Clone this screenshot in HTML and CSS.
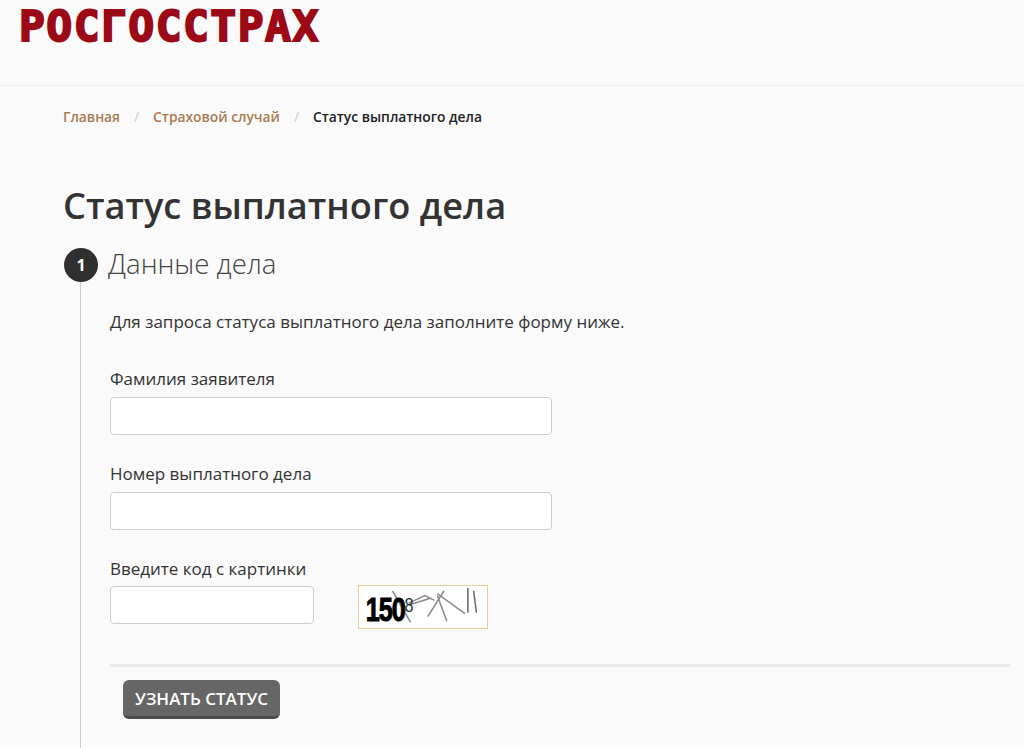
FILE: index.html
```html
<!DOCTYPE html>
<html lang="ru">
  <head>
    <meta charset="UTF-8" />
    <meta name="viewport" content="width=device-width, initial-scale=1.0" />
    <title>Статус выплатного дела</title>
    <link rel="stylesheet" href="styles.css">
  </head>

  <body>
    <header class="site-header">
      <a class="logo" href="#">РОСГОССТРАХ</a>
    </header>

    <main class="content">
      <nav class="breadcrumbs">
        <a href="#">Главная</a>
        <span class="sep">/</span>
        <a href="#">Страховой случай</a>
        <span class="sep">/</span>
        <span class="current">Статус выплатного дела</span>
      </nav>

      <h1>Статус выплатного дела</h1>

      <div class="step-head">
        <span class="step-num">1</span>
        <h2>Данные дела</h2>
      </div>

      <div class="step-body">
        <p class="intro">Для запроса статуса выплатного дела заполните форму ниже.</p>

        <form class="form">
          <div class="field">
            <label for="surname">Фамилия заявителя</label>
            <input type="text" id="surname" autocomplete="off" />
          </div>

          <div class="field">
            <label for="case">Номер выплатного дела</label>
            <input type="text" id="case" autocomplete="off" />
          </div>

          <div class="field">
            <label for="code">Введите код с картинки</label>
            <div class="captcha-row">
              <input class="short" type="text" id="code" autocomplete="off" />
              <svg class="captcha" width="130" height="44" viewBox="0 0 130 44">
                <g fill="none" stroke="#8a8a8a" stroke-width="1.6">
                  <path d="M33 5 L52 38" />
                  <path d="M50 18 L67 10 L77 15" />
                  <path d="M50 20 L72 13" />
                  <path d="M70 32 L87 5" />
                  <path d="M80 10 L90 37" />
                  <path d="M80 8 L109 29" />
                </g>
                <g stroke="#666" stroke-width="1.6">
                  <line x1="112" y1="2" x2="112" y2="28" />
                  <line x1="118" y1="5" x2="121" y2="28" />
                </g>
                <text class="captcha-text" transform="translate(5 37) scale(.78 1)">150<tspan class="thin" dx="0" dy="-10">8</tspan></text>
              </svg>
            </div>
          </div>

          <div class="actions">
            <button type="button">УЗНАТЬ СТАТУС</button>
          </div>
        </form>
      </div>
    </main>
  </body>
</html>
```

FILE: styles.css
```css
html,
body {
  height: 100%;
}

body {
  margin: 0;
  height: 748px;
  overflow: hidden;
  background: #fafafa;
  color: #333;
  font-family: "Open Sans", "Noto Sans", sans-serif;
  font-size: 17px;
}

.site-header {
  height: 86px;
  box-sizing: border-box;
  border-bottom: 1px solid #eee;
  padding: 0 0 0 19px;
}

.logo {
  display: block;
  width: 303px;
  height: 44px;
  color: #9c0a17;
  font-family: "DejaVu Sans Mono", monospace;
  font-weight: 700;
  font-size: 43px;
  line-height: 53px;
  letter-spacing: 1.45px;
  -webkit-text-stroke: 2px #9c0a17;
  text-decoration: none;
  white-space: nowrap;
}

.content {
  padding: 0 14px 0 63px;
}

.breadcrumbs {
  display: flex;
  gap: 14px;
  padding-top: 21px;
  height: 20px;
  line-height: 19px;
  font-size: 13.8px;
  font-weight: 600;
}

.breadcrumbs a {
  color: #a67c52;
  text-decoration: none;
}

.breadcrumbs .sep {
  color: #ccc;
  font-weight: 400;
}

.breadcrumbs .current {
  color: #222;
}

h1 {
  margin: 55px 0 0;
  font-size: 36.2px;
  line-height: 46px;
  font-weight: 600;
  color: #333;
}

.step-head {
  display: flex;
  align-items: center;
  gap: 10px;
  margin: 20px 0 0 1px;
}

.step-num {
  width: 34px;
  height: 34px;
  border-radius: 50%;
  background: #2f2f2f;
  color: #fff;
  font-size: 16px;
  font-weight: 700;
  line-height: 34px;
  text-align: center;
}

h2 {
  margin: 0;
  padding-bottom: 4px;
  font-size: 27.6px;
  line-height: 30px;
  font-weight: 300;
  color: #444;
}

.step-body {
  margin-left: 17px;
  border-left: 1px solid #ccc;
  padding: 29px 0 60px 29px;
}

.intro {
  margin: 0;
  line-height: 22px;
}

.form {
  margin-top: 35px;
}

.field {
  margin-bottom: 28px;
}

.field label {
  display: block;
  line-height: 22px;
  margin-bottom: 7px;
}

.field input {
  display: block;
  box-sizing: border-box;
  width: 442px;
  height: 38px;
  border: 1px solid #ccc;
  border-radius: 4px;
  background: #fff;
}

.field input.short {
  width: 204px;
}

.captcha-row {
  display: flex;
  gap: 44px;
  margin-top: -1px;
}

.captcha {
  display: block;
  box-sizing: border-box;
  margin-top: -1px;
  border: 1px solid #eccb9a;
  background: #fff;
}

.captcha-text {
  font-family: "Liberation Sans", sans-serif;
  font-size: 34px;
  font-weight: 700;
  letter-spacing: -1.5px;
  fill: #000;
  stroke: #000;
  stroke-width: 1px;
}

.captcha-text .thin {
  font-size: 22px;
  font-weight: 400;
  fill: #333;
  stroke: none;
}

.actions {
  margin-top: 35px;
  border-top: 3px solid #e8e8e8;
  padding: 13px 0 0 13px;
}

.actions button {
  display: block;
  height: 39px;
  padding: 0 12px;
  border: 0;
  border-bottom: 3px solid #4c4c4c;
  border-radius: 6px;
  background: #666;
  color: #fff;
  font-family: "Open Sans", sans-serif;
  font-size: 17px;
  font-weight: 600;
}
```
